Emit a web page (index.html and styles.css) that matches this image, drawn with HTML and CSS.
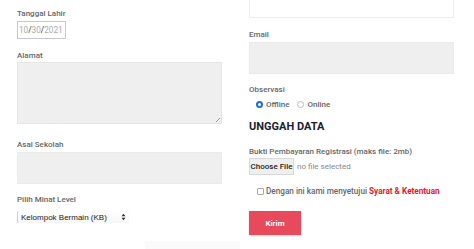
FILE: index.html
```html
<!DOCTYPE html>
<html>
<head>
  <meta charset="UTF-8">
  <meta name="viewport" content="width=device-width, initial-scale=1.0">
  <title>Formulir Pendaftaran</title>
  <link rel="stylesheet" href="styles.css">
</head>
<body>
  <div class="form-grid">
    <!-- KOLOM KIRI -->
    <div class="col">
      <label class="lbl lbl-first">Tanggal Lahir</label>
      <div class="date-box"><span class="dim">10</span>/<span class="dim">30</span>/<span class="dim">2021</span></div>

      <label class="lbl lbl-alamat">Alamat</label>
      <div class="textarea-box"><span class="grip"></span></div>

      <label class="lbl lbl-sekolah">Asal Sekolah</label>
      <div class="input-box"></div>

      <label class="lbl lbl-level">Pilih Minat Level</label>
      <div class="select-box">
        <span>Kelompok Bermain (KB)</span>
        <svg width="5" height="8" viewBox="0 0 5 8"><path d="M0.5 3.2 L2.5 0.8 L4.5 3.2 Z M0.5 4.8 L2.5 7.2 L4.5 4.8 Z" fill="#333"/></svg>
      </div>
    </div>

    <!-- KOLOM KANAN -->
    <div class="col">
      <div class="top-box"></div>

      <label class="lbl lbl-email">Email</label>
      <div class="input-box"></div>

      <label class="lbl lbl-obs">Observasi</label>
      <div class="radio-row">
        <span class="radio checked"></span><span class="opt">Offline</span>
        <span class="radio"></span><span class="opt">Online</span>
      </div>

      <h2 class="section-title">UNGGAH DATA</h2>

      <label class="lbl lbl-bukti">Bukti Pembayaran Registrasi (maks file: 2mb)</label>
      <div class="file-row">
        <span class="file-btn">Choose File</span>
        <span class="file-none">no file selected</span>
      </div>

      <div class="check-row">
        <span class="check"></span>
        <span>Dengan ini kami menyetujui <a class="terms">Syarat &amp; Ketentuan</a></span>
      </div>

      <button class="submit">Kirim</button>
    </div>
  </div>
  <div class="foot-shadow"></div>
</body>
</html>
```

FILE: styles.css
```css
body {
  margin: 0;
  background-color: #fff;
  font-family: Roboto, "Liberation Sans", sans-serif;
  width: 474px;
  height: 249px;
  overflow: hidden;
  position: relative;
}
.form-grid {
  display: grid;
  grid-template-columns: 205px 205px;
  column-gap: 27px;
  padding-left: 17px;
}
.col {
  display: flex;
  flex-direction: column;
  align-items: flex-start;
}
.lbl {
  display: block;
  font-size: 8px;
  line-height: 10px;
  font-weight: 500;
  color: #666;
}
.lbl-first { margin-top: 9px; margin-bottom: 2px; }
.lbl-alamat { margin-top: 12px; margin-bottom: 1px; }
.lbl-sekolah { margin-top: 16px; margin-bottom: 2px; }
.lbl-level { margin-top: 11px; margin-bottom: 6px; }
.lbl-email { margin-top: 12px; margin-bottom: 2px; }
.lbl-obs { margin-top: 11px; margin-bottom: 4px; }
.lbl-bukti { margin-top: 13px; margin-bottom: 1px; }

.date-box {
  box-sizing: border-box;
  height: 18px;
  border: 1px solid #c8c8c8;
  font-size: 8.2px;
  line-height: 16px;
  padding: 0 2px 0 1px;
  color: #333;
  white-space: nowrap;
}
.dim { color: #aaa; }

.textarea-box {
  position: relative;
  box-sizing: border-box;
  width: 205px;
  height: 62px;
  background-color: #efefef;
  border: 1px solid #e6e6e6;
}
.grip {
  position: absolute;
  right: 1px;
  bottom: 1px;
  width: 4px;
  height: 4px;
  background: linear-gradient(135deg, transparent 45%, #999 50%, transparent 60%, transparent 75%, #999 80%, transparent 90%);
}
.input-box {
  box-sizing: border-box;
  width: 205px;
  height: 32px;
  background-color: #efefef;
  border: 1px solid #ebebeb;
}
.select-box {
  box-sizing: border-box;
  width: 112px;
  height: 12px;
  border-left: 1px solid #ccc;
  border-radius: 2px;
  background: linear-gradient(#fff, #f6f6f6);
  display: flex;
  align-items: center;
  justify-content: space-between;
  padding: 0 3px 0 3px;
  font-family: "Liberation Sans", Arial, sans-serif;
  font-size: 8px;
  color: #222;
}

.top-box {
  box-sizing: border-box;
  width: 205px;
  height: 18px;
  border: 1px solid #eee;
  border-top: none;
}
.radio-row {
  display: flex;
  align-items: center;
  height: 10px;
  padding-left: 7px;
  font-size: 8px;
  font-weight: 500;
  color: #666;
}
.radio {
  box-sizing: border-box;
  width: 7px;
  height: 7px;
  border-radius: 50%;
  border: 1px solid #bbb;
  background: #fff;
  margin-right: 3px;
}
.radio.checked {
  border: 2px solid #1e6fe0;
  background: #fff;
}
.opt { margin-right: 8px; }

.section-title {
  margin: 11px 0 0 0;
  font-family: Roboto, sans-serif;
  font-size: 11px;
  line-height: 14px;
  font-weight: 700;
  color: #1b1d2e;
}
.file-row {
  display: flex;
  align-items: center;
  font-size: 8px;
}
.file-btn {
  box-sizing: border-box;
  width: 45px;
  height: 17px;
  line-height: 15px;
  text-align: center;
  background-color: #efefef;
  border: 1px solid #d9d9d9;
  color: #222;
  font-weight: 500;
}
.file-none {
  margin-left: 3px;
  color: #888;
}
.check-row {
  display: flex;
  align-items: center;
  margin-top: 11px;
  padding-left: 8px;
  height: 10px;
  font-size: 8.2px;
  font-weight: 500;
  color: #666;
}
.check {
  box-sizing: border-box;
  width: 7px;
  height: 7px;
  border: 1px solid #aaa;
  border-radius: 1px;
  margin-right: 2px;
}
.terms {
  color: #e8172e;
  font-weight: 700;
}
.submit {
  margin-top: 15px;
  width: 52px;
  height: 24px;
  border: none;
  background-color: #e84a5c;
  color: #fff;
  font-family: Roboto, sans-serif;
  font-size: 8px;
  font-weight: 700;
  box-shadow: 0 1px 2px rgba(0, 0, 0, 0.15);
  cursor: pointer;
}
.foot-shadow {
  position: absolute;
  left: 145px;
  top: 241px;
  width: 95px;
  height: 8px;
  background-color: #fafafa;
}
```
